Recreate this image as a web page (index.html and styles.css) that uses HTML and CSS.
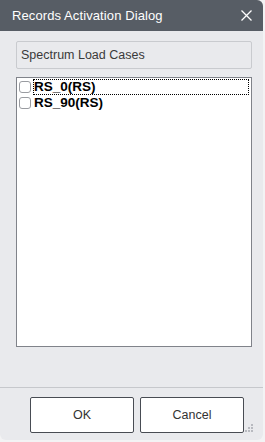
FILE: index.html
```html
<!DOCTYPE html>
<html>
<head>
<meta charset="utf-8">
<link rel="stylesheet" href="styles.css">
</head>
<body>
<div class="window">
  <div class="titlebar">
    <span class="title">Records Activation Dialog</span>
    <svg class="close" width="11" height="11" viewBox="0 0 11 11"><path d="M0.5 0.5 L10.5 10.5 M10.5 0.5 L0.5 10.5" stroke="#ffffff" stroke-width="1.3" fill="none"/></svg>
  </div>
  <div class="content">
    <div class="group-label">Spectrum Load Cases</div>
    <div class="list">
      <div class="item focused"><span class="check"></span><span class="label">RS_0(RS)</span></div>
      <div class="item"><span class="check"></span><span class="label">RS_90(RS)</span></div>
    </div>
  </div>
  <div class="footer">
    <button class="btn">OK</button>
    <button class="btn">Cancel</button>
    <svg class="grip" width="8" height="8" viewBox="0 0 8 8">
      <rect x="6" y="0" width="2" height="2" fill="#b8bac0"/>
      <rect x="3" y="3" width="2" height="2" fill="#b8bac0"/>
      <rect x="6" y="3" width="2" height="2" fill="#b8bac0"/>
      <rect x="0" y="6" width="2" height="2" fill="#b8bac0"/>
      <rect x="3" y="6" width="2" height="2" fill="#b8bac0"/>
      <rect x="6" y="6" width="2" height="2" fill="#b8bac0"/>
    </svg>
  </div>
</div>
</body>
</html>
```
FILE: styles.css
```css
html, body {
  margin: 0;
  padding: 0;
  background: #f3f3f4;
}
body {
  width: 265px;
  height: 442px;
  font-family: "Liberation Sans", Arial, sans-serif;
}
.window {
  width: 263px;
  height: 440px;
  background: #e9eaed;
  border-radius: 0 6px 6px 6px;
  overflow: hidden;
  display: flex;
  flex-direction: column;
}
.titlebar {
  height: 31px;
  flex: none;
  background: #575d65;
  display: flex;
  align-items: center;
  justify-content: space-between;
  padding: 0 11px 0 12px;
  color: #ffffff;
  font-size: 13px;
}
.title {
  letter-spacing: 0.1px;
}
.close {
  display: block;
}
.content {
  flex: 1;
  padding: 10px 11px 0 16px;
  display: flex;
  flex-direction: column;
  gap: 8px;
}
.group-label {
  height: 26px;
  border: 1px solid #c9cbcf;
  border-radius: 2px;
  box-sizing: content-box;
  display: flex;
  align-items: center;
  padding-left: 4px;
  font-size: 12.5px;
  color: #3a3a3a;
}
.list {
  height: 267px;
  border: 1px solid #80838a;
  background: #ffffff;
  padding: 1px 2px 0 2px;
}
.item {
  height: 16px;
  display: flex;
  align-items: center;
  gap: 2px;
}
.check {
  width: 10px;
  height: 10px;
  border: 1px solid #9a9ca1;
  border-radius: 3px;
  background: #ffffff;
  flex: none;
}
.label {
  flex: 1;
  font-weight: bold;
  font-size: 13.5px;
  color: #000000;
  height: 14px;
  line-height: 14px;
  border: 1px solid transparent;
  padding-left: 0;
}
.focused .label {
  border: 1px dotted #000000;
}
.footer {
  box-sizing: border-box;
  height: 53px;
  flex: none;
  border-top: 1px solid #c6c8cc;
  display: flex;
  align-items: flex-start;
  padding: 9px 0 0 30px;
  gap: 6px;
  position: relative;
}
.btn {
  width: 104px;
  height: 36px;
  background: #ffffff;
  border: 1px solid #484c53;
  border-radius: 2px;
  font-family: "Liberation Sans", Arial, sans-serif;
  font-size: 12.5px;
  color: #333333;
  padding: 0;
}
.grip {
  position: absolute;
  right: 10px;
  bottom: 8px;
}
```
